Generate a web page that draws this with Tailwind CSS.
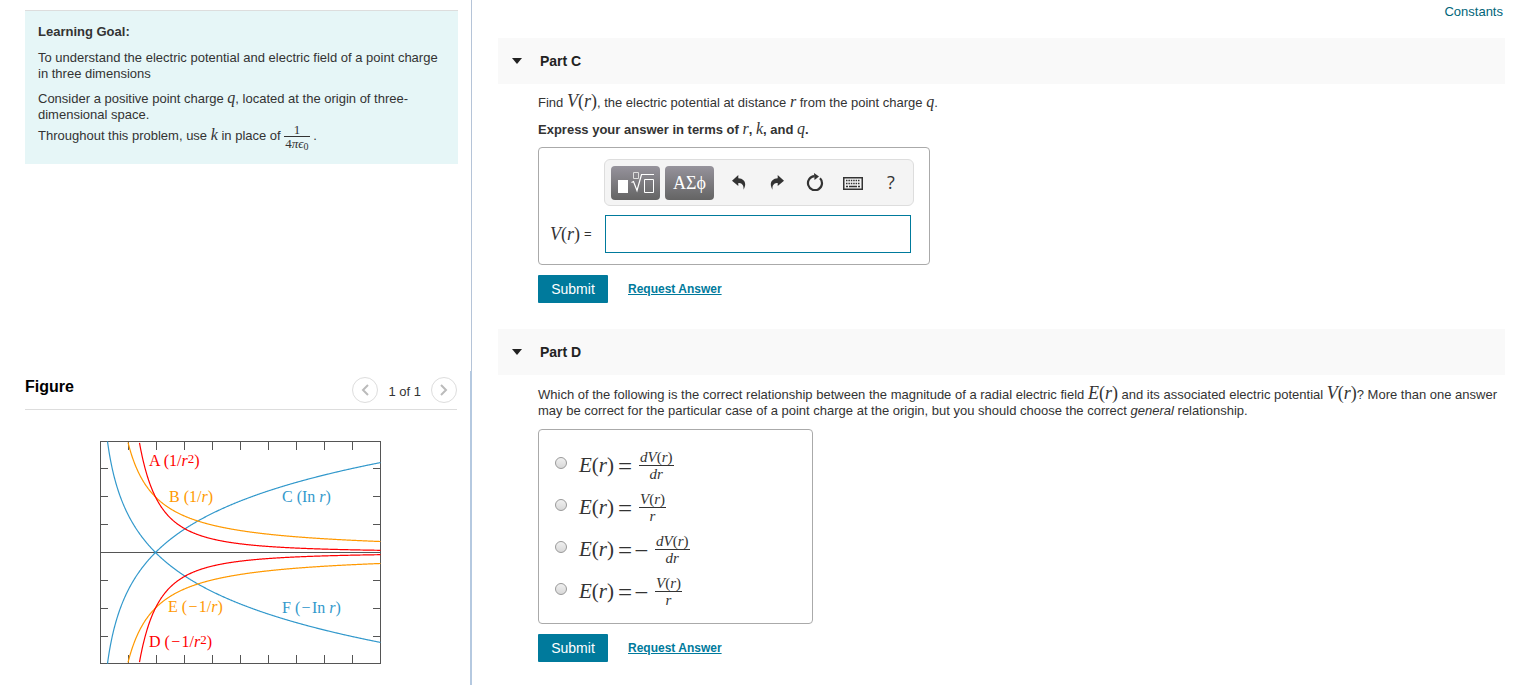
<!DOCTYPE html>
<html lang="en">

<head>
  <meta charset="UTF-8">
  <meta name="viewport" content="width=device-width, initial-scale=1.0">
  <title>Electric Potential and Field</title>
  <script src="https://cdn.jsdelivr.net/npm/@tailwindcss/browser@4"></script>
</head>

<body class="bg-white font-['Liberation_Sans',Arial,sans-serif] text-[13px] leading-4 text-[#333]">
  <div class="flex min-h-screen">

    <aside class="w-[472px] shrink-0 flex flex-col">
      <div class="h-[371px] pt-[10px] pl-[25px] pr-[13px] border-r border-[#b5c4d8]">
        <section class="bg-[#e6f6f7] border-t border-[#ddd] pt-[13px] pb-[14px] px-[13px]">
          <h2 class="font-bold">Learning Goal:</h2>
          <p class="mt-[10px]">To understand the electric potential and electric field of a point charge in three dimensions</p>
          <p class="mt-[9px]">Consider a positive point charge <i class="font-['Liberation_Serif',serif] text-base leading-3">q</i>, located at the origin of three-dimensional space.</p>
          <p>Throughout this problem, use <i class="font-['Liberation_Serif',serif] text-base leading-3">k</i> in place of
            <span class="inline-flex flex-col items-center align-middle font-['Liberation_Serif',serif] text-[13px] leading-[13px]">
              <span class="border-b border-[#333] w-full text-center">1</span>
              <span class="px-px">4<i>πϵ</i><sub class="text-[10px] bottom-[-2px]">0</sub></span>
            </span> .</p>
        </section>
      </div>

      <div class="flex-1 pl-[25px] pr-[13px] border-r-2 border-[#b5c9e0]">
        <div class="flex justify-between h-[39px] border-b border-[#ddd]">
          <h2 class="text-base font-bold text-black leading-8">Figure</h2>
          <div class="flex items-center gap-[10px]">
            <button aria-label="Previous" class="size-[26px] rounded-full border border-[#ddd] flex items-center justify-center">
              <svg class="w-2 h-3" viewBox="0 0 8 12" fill="none" stroke="#bbb" stroke-width="2"><path d="M7 1 2 6l5 5" /></svg>
            </button>
            <span class="pt-1">1 of 1</span>
            <button aria-label="Next" class="size-[26px] rounded-full border border-[#ddd] flex items-center justify-center">
              <svg class="w-2 h-3" viewBox="0 0 8 12" fill="none" stroke="#bbb" stroke-width="2"><path d="m1 1 5 5-5 5" /></svg>
            </button>
          </div>
        </div>

        <svg class="block w-[281px] h-[223px] mt-[31px] ml-[75px] font-['Liberation_Serif',serif] text-base" viewBox="0 0 281 223">
          <g fill="none" stroke="#555">
            <rect x=".5" y=".5" width="280" height="222" />
            <path d="M0 111.5h281" />
            <path id="ticks" />
          </g>
          <g fill="none" stroke-width="1.2">
            <path id="curveC" stroke="#3399cc" />
            <path id="curveF" stroke="#3399cc" />
            <path id="curveB" stroke="#ff9900" />
            <path id="curveE" stroke="#ff9900" />
            <path id="curveA" stroke="#ff0000" />
            <path id="curveD" stroke="#ff0000" />
          </g>
          <text x="49" y="25" fill="#ff0000">A (1/<tspan font-style="italic">r</tspan><tspan font-size="13" dy="-3">2</tspan><tspan dy="3">)</tspan></text>
          <text x="69" y="61" fill="#ff9900">B (1/<tspan font-style="italic">r</tspan>)</text>
          <text x="182" y="61" fill="#3399cc">C (In <tspan font-style="italic">r</tspan>)</text>
          <text x="68" y="171" fill="#ff9900">E (&#8202;−&#8202;1/<tspan font-style="italic">r</tspan>)</text>
          <text x="182" y="172" fill="#3399cc">F (&#8202;−&#8202;In <tspan font-style="italic">r</tspan>)</text>
          <text x="49" y="206" fill="#ff0000">D (&#8202;−&#8202;1/<tspan font-style="italic">r</tspan><tspan font-size="13" dy="-3">2</tspan><tspan dy="3">)</tspan></text>
        </svg>
      </div>
    </aside>

    <main class="flex-1 pl-[26px] pr-[15px] pb-5">
      <div class="h-[38px] pt-1 pr-[2px] text-right">
        <a href="#" class="text-[#006579]">Constants</a>
      </div>

      <section>
        <h2 class="flex items-center gap-[18px] h-[46px] pl-[14px] bg-[#f9f9f9] text-sm font-bold text-[#222]">
          <svg class="w-[10px] h-[6px]" viewBox="0 0 10 6"><path d="M0 0h10L5 6z" fill="#222" /></svg>
          Part C
        </h2>
        <div class="pl-10 pt-[11px]">
          <p>Find <span class="font-['Liberation_Serif',serif] text-lg leading-3"><i>V</i>(<i>r</i>)</span>, the electric potential at distance <i class="font-['Liberation_Serif',serif] text-base leading-3">r</i> from the point charge <i class="font-['Liberation_Serif',serif] text-base leading-3">q</i>.</p>
          <p class="mt-[11px] font-bold">Express your answer in terms of <i class="font-['Liberation_Serif',serif] text-base leading-3 font-normal">r</i>, <i class="font-['Liberation_Serif',serif] text-base leading-3 font-normal">k</i>, and <i class="font-['Liberation_Serif',serif] text-base leading-3 font-normal">q</i>.</p>

          <div class="w-[392px] mt-[9px] pt-[11px] pb-[11px] pl-[11px] pr-[15px] border border-[#aaa] rounded">
            <div class="flex items-center h-[47px] ml-[54px] pl-[6px] bg-[#f4f4f4] border border-[#ddd] rounded-md text-[#333]">
              <button aria-label="Templates" class="w-[49px] h-[34px] rounded bg-linear-to-b from-[#96939c] to-[#646464] flex items-center justify-center">
                <svg class="w-[38px] h-[22px]" viewBox="0 0 38 22" fill="none" stroke="#fff">
                  <path d="M1 8h10v13H1z" fill="#fff" stroke="none" />
                  <path d="M16.500.5h5v6h-5z" stroke="#ddd" />
                  <path d="M14.500 10.500l2-1 3.500 9 4.500-16h12.500" stroke-width="1.200" />
                  <path d="M27.500 7.500h9v13h-9z" />
                </svg>
              </button>
              <button class="w-[49px] h-[34px] ml-[5px] mr-[6px] rounded bg-linear-to-b from-[#96939c] to-[#646464] font-['Liberation_Serif',serif] text-lg leading-none text-white">ΑΣϕ</button>
              <button aria-label="Undo" class="w-[38px] h-[34px] pb-px flex items-center justify-center">
                <svg class="w-[14px] h-[15px]" viewBox="0 0 14 15"><path d="M6.300 0 0 5.700 6.300 11V8C9.500 8 12 9.500 11.500 14.700 15 9 13 3.500 6.300 3.200z" fill="#333" /></svg>
              </button>
              <button aria-label="Redo" class="w-[38px] h-[34px] pb-px flex items-center justify-center">
                <svg class="w-[14px] h-[15px]" viewBox="0 0 14 15"><path d="M7.700 0 14 5.700 7.700 11V8C4.500 8 2 9.500 2.500 14.700-1 9 1 3.500 7.700 3.200z" fill="#333" /></svg>
              </button>
              <button aria-label="Reset" class="w-[38px] h-[34px] pb-[2px] flex items-center justify-center">
                <svg class="w-[18px] h-[18px]" viewBox="0 0 18 18"><path d="M14 5.300A7 7 0 1 1 8.500 3.200" fill="none" stroke="#333" stroke-width="2.200" /><path d="M8 0l5 3.500L8.500 7z" fill="#333" /></svg>
              </button>
              <button aria-label="Keyboard" class="w-[38px] h-[34px] pt-[2px] flex items-center justify-center">
                <svg class="w-5 h-[13px]" viewBox="0 0 20 13" fill="none" stroke="#333">
                  <rect x=".75" y=".75" width="18.500" height="11.500" stroke-width="1.500" />
                  <path d="M3 3.500h14M3 6.500h14" stroke-width="1.500" stroke-dasharray="1.500 .9" />
                  <path d="M3 9.500h2M6 9.500h8M15 9.500h2" stroke-width="1.500" />
                </svg>
              </button>
              <button aria-label="Help" class="w-[38px] h-[34px] pb-[2px] text-lg leading-none font-['Open_Sans',sans-serif]">?</button>
            </div>
            <div class="flex items-center mt-[9px]">
              <label for="answer" class="flex items-center gap-1 w-[55px]"><span class="font-['Liberation_Serif',serif] text-lg leading-5"><i>V</i>(<i>r</i>)</span>=</label>
              <input id="answer" type="text" class="w-[306px] h-[38px] px-2 border border-[#007a9c] outline-none">
            </div>
          </div>

          <div class="flex items-center gap-5 mt-[10px]">
            <button class="w-[70px] h-7 bg-[#007a9c] rounded-[1px] text-sm font-medium text-white">Submit</button>
            <a href="#" class="text-xs font-bold text-[#007a9c] underline">Request Answer</a>
          </div>
        </div>
      </section>

      <section class="mt-[26px]">
        <h2 class="flex items-center gap-[18px] h-[46px] pl-[14px] bg-[#f9f9f9] text-sm font-bold text-[#222]">
          <svg class="w-[10px] h-[6px]" viewBox="0 0 10 6"><path d="M0 0h10L5 6z" fill="#222" /></svg>
          Part D
        </h2>
        <div class="pl-10 pt-3">
          <p>Which of the following is the correct relationship between the magnitude of a radial electric field <span class="font-['Liberation_Serif',serif] text-lg leading-3"><i>E</i>(<i>r</i>)</span> and its associated electric potential <span class="font-['Liberation_Serif',serif] text-lg leading-3"><i>V</i>(<i>r</i>)</span>? More than one answer may be correct for the particular case of a point charge at the origin, but you should choose the correct <em>general</em> relationship.</p>

          <div class="w-[275px] mt-[10px] pl-4 pt-3 pb-[13px] border border-[#aaa] rounded font-['Liberation_Serif',serif] text-[21px] leading-none">
            <div class="flex items-center gap-3 h-[42px]">
              <input type="radio" name="relation" id="r1" class="appearance-none size-3 rounded-full border border-[#999] bg-linear-to-b from-[#f0f0f0] to-[#d8d8d8]">
              <label for="r1" class="flex items-center gap-1 pt-1"><span><i>E</i>(<i>r</i>)</span><span class="w-[17px] pt-1 text-[25px] leading-5">=</span>
                <span class="flex flex-col items-center text-[15px] leading-4"><span class="border-b border-[#333] px-px"><i>dV</i>(<i>r</i>)</span><i>dr</i></span>
              </label>
            </div>
            <div class="flex items-center gap-3 h-[42px]">
              <input type="radio" name="relation" id="r2" class="appearance-none size-3 rounded-full border border-[#999] bg-linear-to-b from-[#f0f0f0] to-[#d8d8d8]">
              <label for="r2" class="flex items-center gap-1 pt-1"><span><i>E</i>(<i>r</i>)</span><span class="w-[17px] pt-1 text-[25px] leading-5">=</span>
                <span class="flex flex-col items-center text-[15px] leading-4"><span class="border-b border-[#333] px-px"><i>V</i>(<i>r</i>)</span><i>r</i></span>
              </label>
            </div>
            <div class="flex items-center gap-3 h-[42px]">
              <input type="radio" name="relation" id="r3" class="appearance-none size-3 rounded-full border border-[#999] bg-linear-to-b from-[#f0f0f0] to-[#d8d8d8]">
              <label for="r3" class="flex items-center gap-1 pt-1"><span><i>E</i>(<i>r</i>)</span><span class="w-[33px] pt-1 text-[25px] leading-5">=&#8202;−</span>
                <span class="flex flex-col items-center text-[15px] leading-4"><span class="border-b border-[#333] px-px"><i>dV</i>(<i>r</i>)</span><i>dr</i></span>
              </label>
            </div>
            <div class="flex items-center gap-3 h-[42px]">
              <input type="radio" name="relation" id="r4" class="appearance-none size-3 rounded-full border border-[#999] bg-linear-to-b from-[#f0f0f0] to-[#d8d8d8]">
              <label for="r4" class="flex items-center gap-1 pt-1"><span><i>E</i>(<i>r</i>)</span><span class="w-[33px] pt-1 text-[25px] leading-5">=&#8202;−</span>
                <span class="flex flex-col items-center text-[15px] leading-4"><span class="border-b border-[#333] px-px"><i>V</i>(<i>r</i>)</span><i>r</i></span>
              </label>
            </div>
          </div>

          <div class="flex items-center gap-5 mt-[10px]">
            <button class="w-[70px] h-7 bg-[#007a9c] rounded-[1px] text-sm font-medium text-white">Submit</button>
            <a href="#" class="text-xs font-bold text-[#007a9c] underline">Request Answer</a>
          </div>
        </div>
      </section>
    </main>
  </div>

  <script>
    const unit = 55.5; // px per unit on both axes
    const mid = 111.5;

    function plot(id, fn) {
      let d = "";
      for (let x = 2; x <= 280.5; x += 0.5) {
        let y = mid - unit * fn(x / unit);
        if (y < 0 || y > 223) continue;
        d += (d ? "L" : "M") + x + " " + y.toFixed(2);
      }
      document.getElementById(id).setAttribute("d", d);
    }

    plot("curveA", r => 1 / (r * r));
    plot("curveB", r => 1 / r);
    plot("curveC", r => Math.log(r));
    plot("curveD", r => -1 / (r * r));
    plot("curveE", r => -1 / r);
    plot("curveF", r => -Math.log(r));

    let ticks = "";
    for (let i = 1; i < 10; i++) {
      let x = Math.round(i * 28) + 0.5;
      ticks += `M${x} 0v9M${x} 223v-9`;
    }
    for (let i = 1; i < 8; i++) {
      if (i == 4) continue; // axis line is already there
      let y = Math.floor(i * 27.9) + 0.5;
      ticks += `M0 ${y}h8M281 ${y}h-8`;
    }
    document.getElementById("ticks").setAttribute("d", ticks);
  </script>
</body>

</html>
